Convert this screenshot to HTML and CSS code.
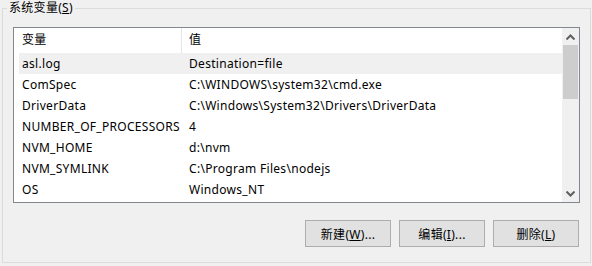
FILE: index.html
```html
<!DOCTYPE html>
<html>
<head>
<meta charset="utf-8">
<link rel="stylesheet" href="styles.css">
</head>
<body>
<div class="group">
  <div class="group-label">系统变量(<u>S</u>)</div>
  <div class="listbox">
    <div class="list">
      <div class="header">
        <div class="c1 hcell">变量</div>
        <div class="c2 hcell">值</div>
      </div>
      <div class="row sel"><div class="c1">asl.log</div><div class="c2">Destination=file</div></div>
      <div class="row"><div class="c1">ComSpec</div><div class="c2">C:\WINDOWS\system32\cmd.exe</div></div>
      <div class="row"><div class="c1">DriverData</div><div class="c2">C:\Windows\System32\Drivers\DriverData</div></div>
      <div class="row"><div class="c1">NUMBER_OF_PROCESSORS</div><div class="c2">4</div></div>
      <div class="row"><div class="c1">NVM_HOME</div><div class="c2">d:\nvm</div></div>
      <div class="row"><div class="c1">NVM_SYMLINK</div><div class="c2">C:\Program Files\nodejs</div></div>
      <div class="row"><div class="c1">OS</div><div class="c2">Windows_NT</div></div>
    </div>
    <div class="scrollbar">
      <div class="arrow"><svg width="9" height="6" viewBox="0 0 9 6"><path d="M0.5 5.5 L4.5 1.5 L8.5 5.5" fill="none" stroke="#606060" stroke-width="2"/></svg></div>
      <div class="thumb"></div>
      <div class="track"></div>
      <div class="arrow"><svg width="9" height="6" viewBox="0 0 9 6"><path d="M0.5 0.5 L4.5 4.5 L8.5 0.5" fill="none" stroke="#606060" stroke-width="2"/></svg></div>
    </div>
  </div>
  <div class="buttons">
    <button class="btn">新建(<u>W</u>)...</button>
    <button class="btn">编辑(<u>I</u>)...</button>
    <button class="btn">删除(<u>L</u>)</button>
  </div>
</div>
</body>
</html>
```
FILE: styles.css
```css
* { box-sizing: border-box; }
html, body { margin: 0; padding: 0; }
body {
  background: #f0f0f0;
  width: 592px;
  height: 266px;
  overflow: hidden;
  font-family: "Noto Sans", "Noto Sans CJK SC", sans-serif;
  font-size: 12px;
  color: #000;
  padding: 8px 1px 0 2px;
}
.group {
  position: relative;
  border: 1px solid #dcdcdc;
  height: 255px;
  padding: 18px 10px 0 10px;
}
.group-label {
  position: absolute;
  left: 4px;
  top: -9px;
  padding: 0 2px;
  background: #f0f0f0;
  line-height: 16px;
  letter-spacing: 0.3px;
}
.group-label u, .btn u { text-decoration: underline; text-underline-offset: 1px; }
.listbox {
  display: flex;
  width: 567px;
  height: 176px;
  border: 1px solid #828790;
  background: #fff;
}
.list { flex: 1; overflow: hidden; letter-spacing: 0.3px; }
.header { display: flex; height: 25px; align-items: stretch; }
.hcell { line-height: 24px; }
.header .c1 { border-right: 1px solid #e5e5e5; }
.row { display: flex; height: 21px; line-height: 21px; margin-left: 5px; padding-left: 0; }
.row.sel { background: #f0f0f0; }
.c1 { width: 168px; padding-left: 8px; white-space: nowrap; }
.row .c1 { width: 163px; padding-left: 3px; }
.c2 { flex: 1; padding-left: 7px; white-space: nowrap; }
.scrollbar {
  width: 17px;
  background: #f0f0f0;
  display: flex;
  flex-direction: column;
  align-items: center;
}
.arrow { height: 17px; width: 17px; display: flex; align-items: center; justify-content: center; }
.thumb { width: 15px; height: 54px; background: #cdcdcd; }
.track { flex: 1; }
.buttons {
  display: flex;
  justify-content: flex-end;
  gap: 8px;
  width: 566px;
  margin-top: 17px;
}
.btn {
  width: 86px;
  height: 27px;
  background: #e1e1e1;
  border: 1px solid #adadad;
  font-family: "Noto Sans", "Noto Sans CJK SC", sans-serif;
  font-size: 12px;
  letter-spacing: 0.3px;
  color: #000;
  padding: 0;
  border-radius: 0;
}
```
